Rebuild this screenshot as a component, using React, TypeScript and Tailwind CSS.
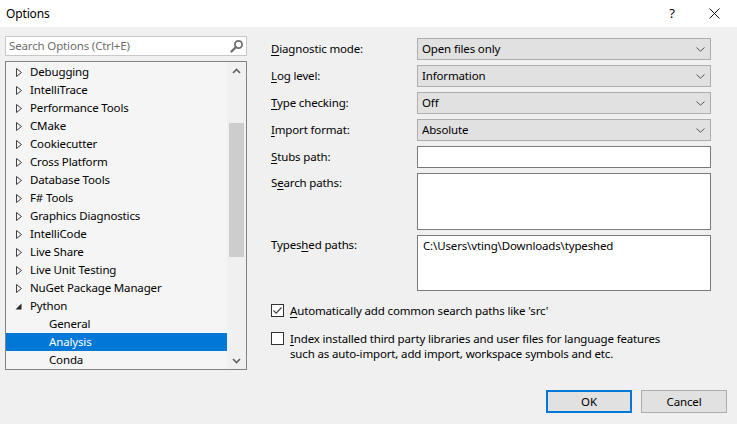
import React from "react";

const font = { fontFamily: '"Noto Sans", "Open Sans", sans-serif', letterSpacing: "-0.15px" };

function ClosedTri() {
  return (
    <svg width="6" height="9" viewBox="0 0 6 9" className="shrink-0">
      <path d="M0.5 0.5 L5.5 4.5 L0.5 8.5 Z" fill="none" stroke="#404040" strokeWidth="1" />
    </svg>
  );
}

function OpenTri() {
  return (
    <svg width="7" height="7" viewBox="0 0 7 7" className="shrink-0">
      <path d="M6.5 0.5 L6.5 6.5 L0.5 6.5 Z" fill="#262626" />
    </svg>
  );
}

function Chevron({ up = false, color = "#606060" }: { up?: boolean; color?: string }) {
  return (
    <svg width="9" height="6" viewBox="0 0 9 6">
      {up ? (
        <path d="M1 5 L4.5 1.5 L8 5" fill="none" stroke={color} strokeWidth="1.6" />
      ) : (
        <path d="M1 1 L4.5 4.5 L8 1" fill="none" stroke={color} strokeWidth="1.6" />
      )}
    </svg>
  );
}

const topItems = [
  "Debugging",
  "IntelliTrace",
  "Performance Tools",
  "CMake",
  "Cookiecutter",
  "Cross Platform",
  "Database Tools",
  "F# Tools",
  "Graphics Diagnostics",
  "IntelliCode",
  "Live Share",
  "Live Unit Testing",
  "NuGet Package Manager",
];

function Select({ value }: { value: string }) {
  return (
    <div className="h-[22px] w-[294px] border border-[#adadad] bg-[#e1e1e1] flex items-center justify-between pl-[4px] pr-[5px] text-[11.5px] text-black">
      <span>{value}</span>
      <svg width="9" height="5" viewBox="0 0 9 5">
        <path d="M0.5 0.5 L4.5 4.2 L8.5 0.5" fill="none" stroke="#555" strokeWidth="1" />
      </svg>
    </div>
  );
}

function Label({ pre, u, post, top = false }: { pre?: string; u: string; post: string; top?: boolean }) {
  return (
    <div className={`text-[11.5px] text-black flex ${top ? "items-start pt-[1px]" : "items-center"}`}>
      <span>
        {pre}
        <span className="underline underline-offset-2">{u}</span>
        {post}
      </span>
    </div>
  );
}

function CheckBox({ checked }: { checked: boolean }) {
  return (
    <div className="w-[13px] h-[13px] border border-[#333] bg-white shrink-0 flex items-center justify-center">
      {checked && (
        <svg width="11" height="11" viewBox="0 0 11 11">
          <path d="M1.5 5.5 L4.2 8.2 L9.5 2.5" fill="none" stroke="#444" strokeWidth="1.2" />
        </svg>
      )}
    </div>
  );
}

export default function App() {
  return (
    <div className="w-[737px] h-[424px] bg-[#f0f0f0] flex flex-col overflow-hidden" style={font}>
      {/* Title bar */}
      <div className="h-[27px] bg-white flex items-center shrink-0">
        <span className="pl-[6px] text-[12px] text-black flex-1">Options</span>
        <span className="text-[13px] text-black w-[14px] mr-[30px] text-center">?</span>
        <svg width="11" height="11" viewBox="0 0 11 11" className="mr-[17px]">
          <path d="M0.5 0.5 L10.5 10.5 M10.5 0.5 L0.5 10.5" stroke="#111" strokeWidth="1" />
        </svg>
      </div>

      <div className="flex flex-1">
        {/* Left column */}
        <div className="w-[242px] ml-[5px] pt-[9px] flex flex-col shrink-0">
          <div className="h-[20px] border border-[#c8c8c8] bg-white flex items-center justify-between pl-[3px] pr-[2px]">
            <span className="text-[11.5px] text-[#6d6d6d]">Search Options (Ctrl+E)</span>
            <svg width="14" height="14" viewBox="0 0 14 14">
              <circle cx="8.5" cy="5.5" r="3.6" fill="none" stroke="#707070" strokeWidth="1.8" />
              <path d="M6 8 L1.5 12.5" stroke="#707070" strokeWidth="2.4" strokeLinecap="round" />
            </svg>
          </div>
          <div className="mt-[5px] h-[309px] border border-[#828282] bg-[#f5f5f5] flex overflow-hidden">
            <div className="flex-1 pt-[1px] flex flex-col overflow-hidden">
              {topItems.map((t) => (
                <div key={t} className="h-[18px] shrink-0 flex items-center pl-[10px] text-[11.5px] text-black">
                  <ClosedTri />
                  <span className="ml-[8px]">{t}</span>
                </div>
              ))}
              <div className="h-[18px] shrink-0 flex items-center pl-[9px] text-[11.5px] text-black">
                <OpenTri />
                <span className="ml-[8px]">Python</span>
              </div>
              <div className="h-[18px] shrink-0 flex items-center pl-[43px] text-[11.5px] text-black">General</div>
              <div className="h-[18px] shrink-0 flex items-center pl-[43px] text-[11.5px] text-white bg-[#0078d7]">Analysis</div>
              <div className="h-[18px] shrink-0 flex items-center pl-[43px] text-[11.5px] text-black">Conda</div>
            </div>
            {/* scrollbar */}
            <div className="w-[19px] bg-[#f0f0f0] flex flex-col items-center shrink-0">
              <div className="h-[17px] flex items-center justify-center">
                <Chevron up />
              </div>
              <div className="mt-[44px] h-[134px] w-[15px] bg-[#cdcdcd]" />
              <div className="flex-1" />
              <div className="h-[17px] flex items-center justify-center">
                <Chevron />
              </div>
            </div>
          </div>
        </div>

        {/* Right column */}
        <div className="ml-[24px] pt-[11px] flex flex-col">
          <div className="grid grid-cols-[146px_294px] gap-y-[5px]">
            <Label u="D" post="iagnostic mode:" />
            <Select value="Open files only" />
            <Label u="L" post="og level:" />
            <Select value="Information" />
            <Label u="T" post="ype checking:" />
            <Select value="Off" />
            <Label u="I" post="mport format:" />
            <Select value="Absolute" />
            <Label u="S" post="tubs path:" />
            <div className="h-[22px] border border-[#7a7a7a] bg-white" />
            <Label pre="S" u="e" post="arch paths:" top />
            <div className="h-[57px] border border-[#7a7a7a] bg-white" />
            <Label pre="Types" u="h" post="ed paths:" top />
            <div className="h-[56px] border border-[#7a7a7a] bg-white pl-[5px] pt-[1px] text-[11.5px] text-black">
              C:\Users\vting\Downloads\typeshed
            </div>
          </div>

          <div className="mt-[11px] flex items-center">
            <CheckBox checked />
            <span className="ml-[6px] text-[11.5px] text-black">
              <span className="underline underline-offset-2">A</span>utomatically add common search paths like 'src'
            </span>
          </div>
          <div className="mt-[12px] flex items-start">
            <div className="pt-[1px]">
              <CheckBox checked={false} />
            </div>
            <div className="ml-[6px] text-[11.5px] text-black flex flex-col">
              <span className="leading-[15px]">
                <span className="underline underline-offset-2">I</span>ndex installed third party libraries and user files for language features
              </span>
              <span className="leading-[15px]">such as auto-import, add import, workspace symbols and etc.</span>
            </div>
          </div>
        </div>
      </div>

      {/* Buttons */}
      <div className="h-[34px] flex items-start justify-end pr-[10px] gap-[9px] shrink-0">
        <div className="w-[86px] h-[23px] border-2 border-[#0078d7] bg-[#e1e1e1] flex items-center justify-center text-[11.5px] text-black">
          OK
        </div>
        <div className="w-[86px] h-[23px] border border-[#adadad] bg-[#e1e1e1] flex items-center justify-center text-[11.5px] text-black">
          Cancel
        </div>
      </div>
    </div>
  );
}
